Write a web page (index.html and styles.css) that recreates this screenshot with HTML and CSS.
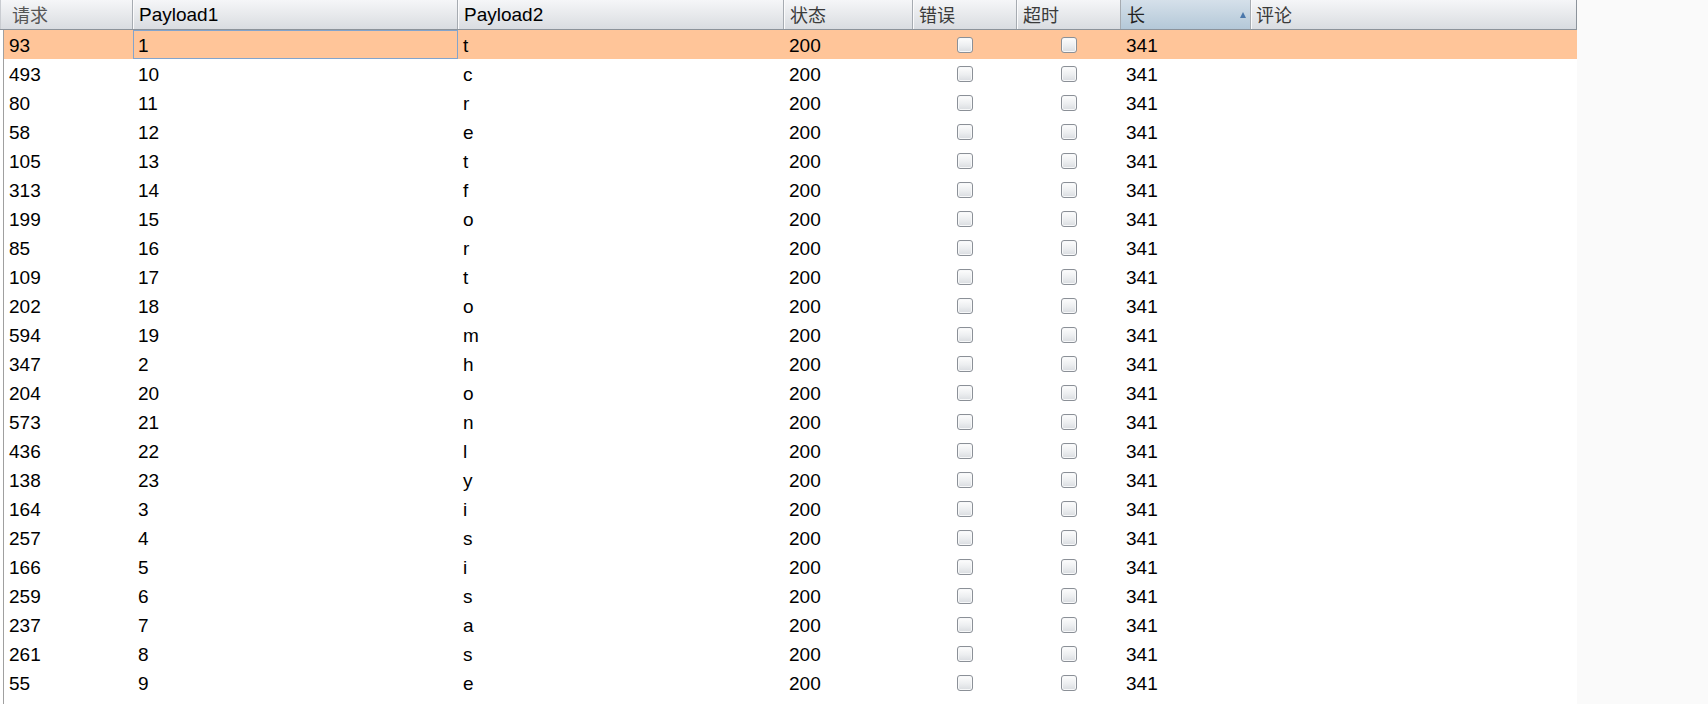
FILE: index.html
```html
<!DOCTYPE html>
<html>
<head>
<meta charset="utf-8">
<link rel="stylesheet" href="styles.css">
</head>
<body>
<div class="table">
  <div class="head">
    <div class="hc c1 first">请求</div>
    <div class="hc c2 latin">Payload1</div>
    <div class="hc c3 latin">Payload2</div>
    <div class="hc c4">状态</div>
    <div class="hc c5">错误</div>
    <div class="hc c6">超时</div>
    <div class="hc c7 sorted">长<span class="arrow"></span></div>
    <div class="hc c8 last">评论</div>
  </div>
  <div class="body">
    <div class="row sel"><div class="c c1 first">93</div><div class="c c2 focus">1</div><div class="c c3">t</div><div class="c c4">200</div><div class="c c5 cb"><span class="box"></span></div><div class="c c6 cb"><span class="box"></span></div><div class="c c7">341</div><div class="c c8"></div></div>
    <div class="row"><div class="c c1 first">493</div><div class="c c2">10</div><div class="c c3">c</div><div class="c c4">200</div><div class="c c5 cb"><span class="box"></span></div><div class="c c6 cb"><span class="box"></span></div><div class="c c7">341</div><div class="c c8"></div></div>
    <div class="row"><div class="c c1 first">80</div><div class="c c2">11</div><div class="c c3">r</div><div class="c c4">200</div><div class="c c5 cb"><span class="box"></span></div><div class="c c6 cb"><span class="box"></span></div><div class="c c7">341</div><div class="c c8"></div></div>
    <div class="row"><div class="c c1 first">58</div><div class="c c2">12</div><div class="c c3">e</div><div class="c c4">200</div><div class="c c5 cb"><span class="box"></span></div><div class="c c6 cb"><span class="box"></span></div><div class="c c7">341</div><div class="c c8"></div></div>
    <div class="row"><div class="c c1 first">105</div><div class="c c2">13</div><div class="c c3">t</div><div class="c c4">200</div><div class="c c5 cb"><span class="box"></span></div><div class="c c6 cb"><span class="box"></span></div><div class="c c7">341</div><div class="c c8"></div></div>
    <div class="row"><div class="c c1 first">313</div><div class="c c2">14</div><div class="c c3">f</div><div class="c c4">200</div><div class="c c5 cb"><span class="box"></span></div><div class="c c6 cb"><span class="box"></span></div><div class="c c7">341</div><div class="c c8"></div></div>
    <div class="row"><div class="c c1 first">199</div><div class="c c2">15</div><div class="c c3">o</div><div class="c c4">200</div><div class="c c5 cb"><span class="box"></span></div><div class="c c6 cb"><span class="box"></span></div><div class="c c7">341</div><div class="c c8"></div></div>
    <div class="row"><div class="c c1 first">85</div><div class="c c2">16</div><div class="c c3">r</div><div class="c c4">200</div><div class="c c5 cb"><span class="box"></span></div><div class="c c6 cb"><span class="box"></span></div><div class="c c7">341</div><div class="c c8"></div></div>
    <div class="row"><div class="c c1 first">109</div><div class="c c2">17</div><div class="c c3">t</div><div class="c c4">200</div><div class="c c5 cb"><span class="box"></span></div><div class="c c6 cb"><span class="box"></span></div><div class="c c7">341</div><div class="c c8"></div></div>
    <div class="row"><div class="c c1 first">202</div><div class="c c2">18</div><div class="c c3">o</div><div class="c c4">200</div><div class="c c5 cb"><span class="box"></span></div><div class="c c6 cb"><span class="box"></span></div><div class="c c7">341</div><div class="c c8"></div></div>
    <div class="row"><div class="c c1 first">594</div><div class="c c2">19</div><div class="c c3">m</div><div class="c c4">200</div><div class="c c5 cb"><span class="box"></span></div><div class="c c6 cb"><span class="box"></span></div><div class="c c7">341</div><div class="c c8"></div></div>
    <div class="row"><div class="c c1 first">347</div><div class="c c2">2</div><div class="c c3">h</div><div class="c c4">200</div><div class="c c5 cb"><span class="box"></span></div><div class="c c6 cb"><span class="box"></span></div><div class="c c7">341</div><div class="c c8"></div></div>
    <div class="row"><div class="c c1 first">204</div><div class="c c2">20</div><div class="c c3">o</div><div class="c c4">200</div><div class="c c5 cb"><span class="box"></span></div><div class="c c6 cb"><span class="box"></span></div><div class="c c7">341</div><div class="c c8"></div></div>
    <div class="row"><div class="c c1 first">573</div><div class="c c2">21</div><div class="c c3">n</div><div class="c c4">200</div><div class="c c5 cb"><span class="box"></span></div><div class="c c6 cb"><span class="box"></span></div><div class="c c7">341</div><div class="c c8"></div></div>
    <div class="row"><div class="c c1 first">436</div><div class="c c2">22</div><div class="c c3">l</div><div class="c c4">200</div><div class="c c5 cb"><span class="box"></span></div><div class="c c6 cb"><span class="box"></span></div><div class="c c7">341</div><div class="c c8"></div></div>
    <div class="row"><div class="c c1 first">138</div><div class="c c2">23</div><div class="c c3">y</div><div class="c c4">200</div><div class="c c5 cb"><span class="box"></span></div><div class="c c6 cb"><span class="box"></span></div><div class="c c7">341</div><div class="c c8"></div></div>
    <div class="row"><div class="c c1 first">164</div><div class="c c2">3</div><div class="c c3">i</div><div class="c c4">200</div><div class="c c5 cb"><span class="box"></span></div><div class="c c6 cb"><span class="box"></span></div><div class="c c7">341</div><div class="c c8"></div></div>
    <div class="row"><div class="c c1 first">257</div><div class="c c2">4</div><div class="c c3">s</div><div class="c c4">200</div><div class="c c5 cb"><span class="box"></span></div><div class="c c6 cb"><span class="box"></span></div><div class="c c7">341</div><div class="c c8"></div></div>
    <div class="row"><div class="c c1 first">166</div><div class="c c2">5</div><div class="c c3">i</div><div class="c c4">200</div><div class="c c5 cb"><span class="box"></span></div><div class="c c6 cb"><span class="box"></span></div><div class="c c7">341</div><div class="c c8"></div></div>
    <div class="row"><div class="c c1 first">259</div><div class="c c2">6</div><div class="c c3">s</div><div class="c c4">200</div><div class="c c5 cb"><span class="box"></span></div><div class="c c6 cb"><span class="box"></span></div><div class="c c7">341</div><div class="c c8"></div></div>
    <div class="row"><div class="c c1 first">237</div><div class="c c2">7</div><div class="c c3">a</div><div class="c c4">200</div><div class="c c5 cb"><span class="box"></span></div><div class="c c6 cb"><span class="box"></span></div><div class="c c7">341</div><div class="c c8"></div></div>
    <div class="row"><div class="c c1 first">261</div><div class="c c2">8</div><div class="c c3">s</div><div class="c c4">200</div><div class="c c5 cb"><span class="box"></span></div><div class="c c6 cb"><span class="box"></span></div><div class="c c7">341</div><div class="c c8"></div></div>
    <div class="row"><div class="c c1 first">55</div><div class="c c2">9</div><div class="c c3">e</div><div class="c c4">200</div><div class="c c5 cb"><span class="box"></span></div><div class="c c6 cb"><span class="box"></span></div><div class="c c7">341</div><div class="c c8"></div></div>
  </div>
</div>
</body>
</html>
```
FILE: styles.css
```css
html, body {
  margin: 0;
  padding: 0;
  background: #fafafa;
  height: 704px;
  overflow: hidden;
}
body {
  font-family: "Liberation Sans", Arial, "Noto Sans CJK SC", sans-serif;
  font-size: 19px;
  color: #000;
}
.table {
  width: 1577px;
  height: 704px;
  background: #fff;
  display: flex;
  flex-direction: column;
}
.head, .row {
  display: grid;
  grid-template-columns: 133px 325px 326px 129px 104px 104px 130px 326px;
}
.head {
  height: 30px;
  box-sizing: border-box;
  border-bottom: 1px solid #8c939b;
  background: linear-gradient(#f5f6f8 0%, #e6e8eb 55%, #d9dce1 100%);
}
.hc {
  position: relative;
  box-sizing: border-box;
  height: 29px;
  line-height: 29px;
  padding-left: 6px;
  border-right: 1px solid #a6abb1;
  box-shadow: inset 1px 0 0 #fbfbfc;
  font-family: "Noto Sans CJK SC", "Liberation Sans", sans-serif;
  font-size: 18px;
  color: #3a3a3a;
  white-space: nowrap;
  overflow: hidden;
}
.hc.latin {
  font-family: "Liberation Sans", Arial, sans-serif;
  font-size: 19px;
  color: #000;
}
.hc.first {
  padding-left: 11px;
  border-left: 1px solid #c9ccd1;
  box-shadow: none;
  color: #555;
}
.hc.last {
  padding-left: 5px;
  border-right: 1px solid #8c939b;
}
.hc.sorted {
  background: linear-gradient(#d5e0ea 0%, #c3d3e0 55%, #b4c8d8 100%);
  box-shadow: none;
  color: #222;
}
.arrow {
  position: absolute;
  right: 4px;
  top: 12px;
  width: 0;
  height: 0;
  border-left: 3.5px solid transparent;
  border-right: 3.5px solid transparent;
  border-bottom: 6px solid #4a77ab;
}
.body {
  flex: 1;
  border-left: 1px solid #a0a0a0;
  margin-left: 3px;
}
.body .row {
  grid-template-columns: 129px 325px 326px 129px 104px 104px 130px 326px;
  height: 29px;
}
.c {
  box-sizing: border-box;
  height: 29px;
  line-height: 29px;
  padding-top: 1px;
  padding-left: 5px;
  white-space: nowrap;
}
.row.sel {
  background: #ffc599;
}
.c.focus {
  border: 1px solid #83a4cc;
  line-height: 27px;
  padding-top: 1px;
  padding-left: 4px;
}
.cb {
  display: flex;
  align-items: center;
  justify-content: center;
  padding-left: 0;
}
.box {
  display: block;
  width: 14px;
  height: 14px;
  border: 1px solid #8b9097;
  border-radius: 3px;
  background: linear-gradient(#fdfdfd 0%, #eceef0 55%, #d9dce0 100%);
  box-shadow: inset 0 0 0 1px #f7f8f9;
}
```
